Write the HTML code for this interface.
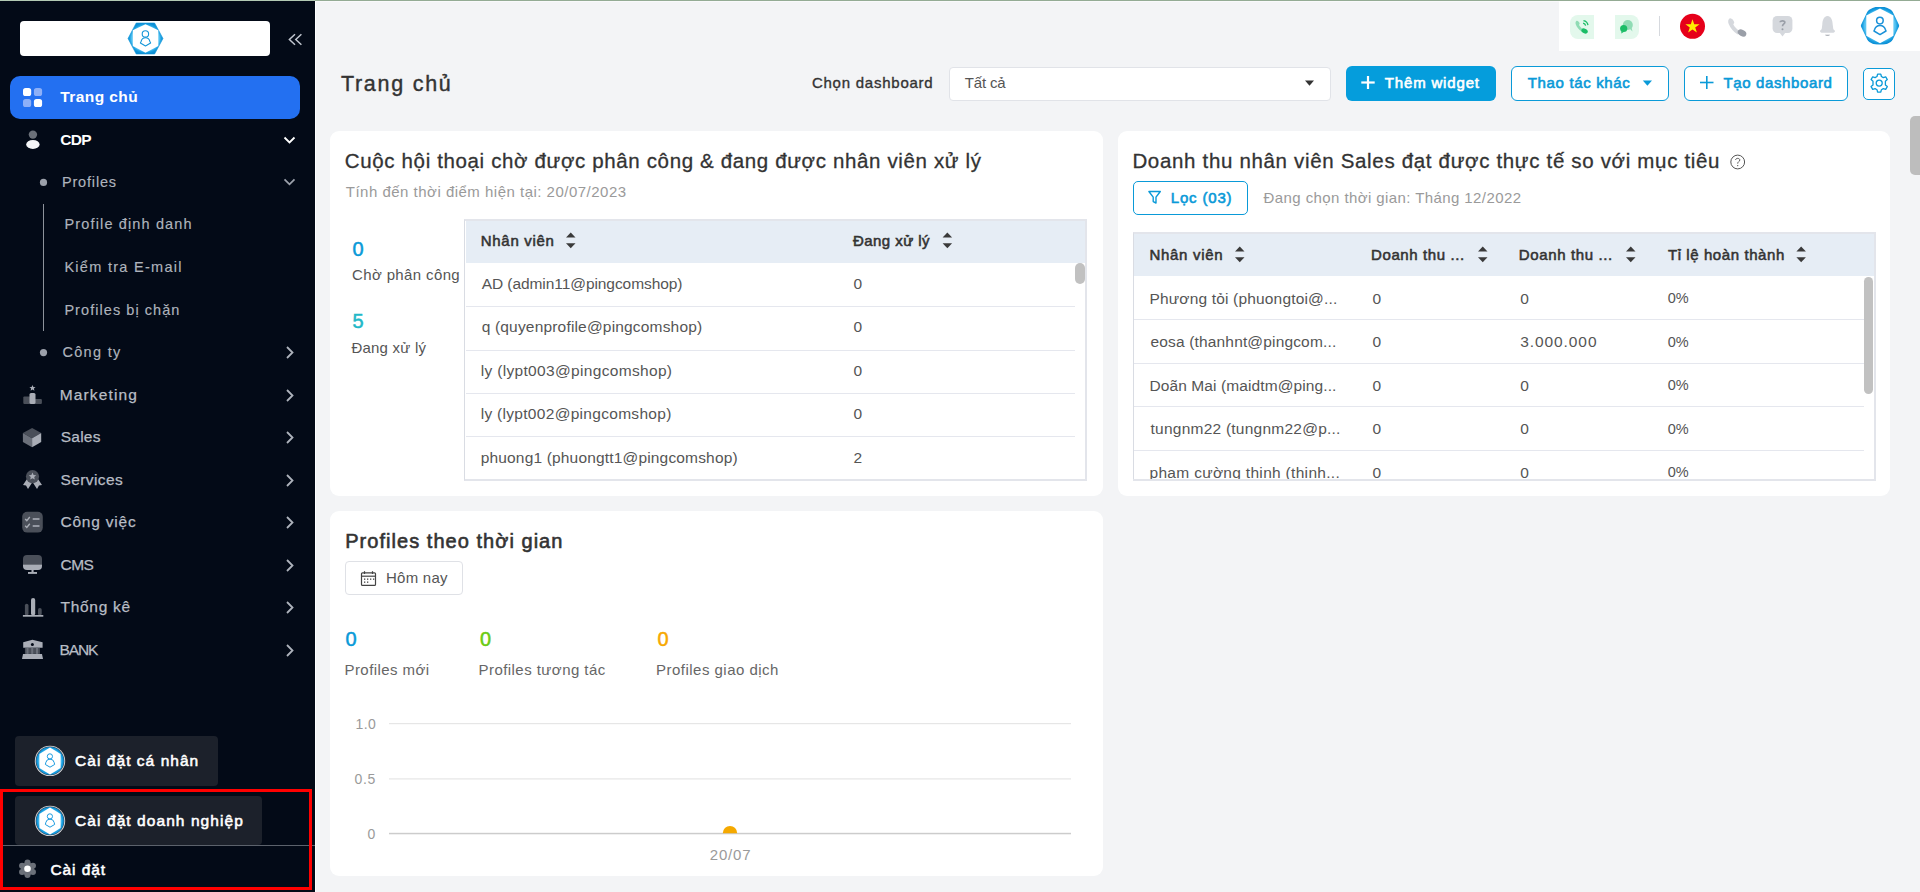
<!DOCTYPE html>
<html><head><meta charset="utf-8">
<style>
*{box-sizing:border-box;margin:0;padding:0}
html,body{width:1920px;height:892px;overflow:hidden;background:#f3f4f6;font-family:"Liberation Sans",sans-serif;color:#333}
.tx{position:absolute;white-space:nowrap;z-index:5}
.a{position:absolute}
svg{position:absolute;overflow:visible}
</style></head><body>
<!-- top line -->
<div class="a" style="left:0;top:0;width:1920px;height:1px;background:#94ab94;z-index:20"></div>
<div class="a" style="left:0;top:0;width:315px;height:1px;background:#b3c9b3;z-index:21"></div>
<div class="a" style="left:316px;top:1px;width:1604px;height:1px;background:#f9f9fb"></div>

<!-- SIDEBAR -->
<div class="a" style="left:0;top:0;width:315px;height:892px;background:#030a17"></div>
<div class="a" style="left:315px;top:0;width:1px;height:892px;background:#fff"></div>
<div class="a" style="left:20px;top:21px;width:250px;height:35px;background:#fff;border-radius:4px"></div>
<!-- logo hex -->
<svg style="left:0;top:0" width="315" height="70">
  <defs><radialGradient id="hexg" cx="0.5" cy="0.5" r="0.5"><stop offset="0.78" stop-color="#5cc6f3"/><stop offset="0.9" stop-color="#1a9fe0"/><stop offset="1" stop-color="#0b8ed5"/></radialGradient></defs>
  <polygon points="128,38.5 136.2,23 154.6,23 163,38.5 154.6,54 136.2,54" fill="url(#hexg)" stroke="#1496d8" stroke-width="0.6" stroke-linejoin="round"/>
  <polygon points="145.5,24.2 158.3,30.3 158.3,45.9 145.5,52.8 132.8,45.9 132.8,30.3" fill="#fff"/>
  <circle cx="145.4" cy="33.9" r="3.2" fill="none" stroke="#1496d8" stroke-width="1.1"/>
  <path d="M141.2,41.2 A4.4,4.4 0 0 1 149.8,41.2 L150.6,43 L145.5,46 L140.4,43 Z" fill="none" stroke="#1496d8" stroke-width="1.1" stroke-linejoin="round"/>
</svg>
<!-- collapse -->
<svg style="left:0;top:0" width="315" height="70">
  <polyline points="295,34.3 289.4,39.5 295,44.7" fill="none" stroke="#c0c5ce" stroke-width="1.5"/>
  <polyline points="301.4,34.3 295.8,39.5 301.4,44.7" fill="none" stroke="#c0c5ce" stroke-width="1.5"/>
</svg>
<!-- active item -->
<div class="a" style="left:10px;top:76px;width:290px;height:43px;background:#2370f1;border-radius:10px"></div>
<svg style="left:0;top:0" width="315" height="700">
  <!-- grid icon -->
  <rect x="23" y="88" width="8.2" height="8" rx="2.6" fill="#fff"/>
  <rect x="33.9" y="88" width="8.2" height="8" rx="2.6" fill="#8db0f8"/>
  <rect x="23" y="99" width="8.2" height="8" rx="2.6" fill="#8db0f8"/>
  <rect x="33.9" y="99" width="8.2" height="8" rx="2.6" fill="#fff"/>
  <!-- CDP person -->
  <circle cx="32.9" cy="134.6" r="4.2" fill="#6b7079"/>
  <ellipse cx="32.9" cy="144.4" rx="6.7" ry="4.5" fill="#f4f5f7"/>
  <polyline points="284.5,137.5 289.5,142.5 294.5,137.5" fill="none" stroke="#fff" stroke-width="1.8"/>
  <!-- Profiles -->
  <circle cx="43.5" cy="182.4" r="3.6" fill="#9ca1ab"/>
  <polyline points="284.5,179.3 289.5,184.3 294.5,179.3" fill="none" stroke="#9ca1ab" stroke-width="1.8"/>
  <rect x="43" y="204" width="1" height="127" fill="#8d929b"/>
  <!-- Cong ty -->
  <circle cx="43.5" cy="352.6" r="3.6" fill="#9ca1ab"/>
  <g fill="none" stroke="#aeb3bc" stroke-width="1.8">
    <polyline points="287,347 292.5,352.5 287,358"/>
    <polyline points="287,390 292.5,395.5 287,401"/>
    <polyline points="287,432 292.5,437.5 287,443"/>
    <polyline points="287,475 292.5,480.5 287,486"/>
    <polyline points="287,517 292.5,522.5 287,528"/>
    <polyline points="287,560 292.5,565.5 287,571"/>
    <polyline points="287,602 292.5,607.5 287,613"/>
    <polyline points="287,645 292.5,650.5 287,656"/>
  </g>
  <!-- Marketing podium -->
  <path d="M32.5,384.9 L33.4,387 L35.6,387.2 L33.9,388.6 L34.4,390.8 L32.5,389.6 L30.6,390.8 L31.1,388.6 L29.4,387.2 L31.6,387 Z" fill="#a9adb6"/>
  <rect x="23.3" y="396.5" width="7" height="7.4" rx="1" fill="#4a4f59"/>
  <rect x="34.5" y="399" width="7.4" height="4.9" rx="1" fill="#4a4f59"/>
  <rect x="29.5" y="393" width="6" height="10.9" rx="1.5" fill="#a9adb6"/>
  <!-- Sales cube -->
  <polygon points="32.1,427.9 41.2,433 32.1,438.2 22.9,433" fill="#4a4f59"/>
  <polygon points="22.9,433 32.1,438.2 32.1,447.2 22.9,442" fill="#6b707a"/>
  <polygon points="41.2,433 32.1,438.2 32.1,447.2 41.2,442" fill="#a9adb6"/>
  <!-- Services award -->
  <polygon points="27,479 23,485 26,485.5 28,489 32.5,482" fill="#a9adb6"/>
  <polygon points="38,479 42,485 39,485.5 37,489 32.5,482" fill="#a9adb6"/>
  <circle cx="32.5" cy="476.6" r="6.6" fill="#4a4f59"/>
  <path d="M32.5,472.6 L33.6,475.1 L36.2,475.3 L34.2,477 L34.8,479.6 L32.5,478.2 L30.2,479.6 L30.8,477 L28.8,475.3 L31.4,475.1 Z" fill="#a9adb6"/>
  <!-- Cong viec -->
  <rect x="22.2" y="511.8" width="20.6" height="20.8" rx="5" fill="#4a4f59"/>
  <g fill="none" stroke="#a9adb6" stroke-width="1.4">
    <polyline points="25.2,519 26.8,520.6 29.8,517"/>
    <polyline points="25.2,525.8 26.8,527.4 29.8,523.8"/>
    <line x1="32.7" y1="519" x2="39.5" y2="519" stroke-width="1.6"/>
    <line x1="32.7" y1="526" x2="39.5" y2="526" stroke-width="1.6"/>
  </g>
  <!-- CMS monitor -->
  <path d="M27,554.9 H38 A4,4 0 0 1 42,558.9 V564.6 H23 V558.9 A4,4 0 0 1 27,554.9 Z" fill="#4a4f59"/>
  <path d="M23,564.6 H42 V566.1 A4,4 0 0 1 38,570.1 H27 A4,4 0 0 1 23,566.1 Z" fill="#a9adb6"/>
  <rect x="31.5" y="570" width="2.1" height="2.5" fill="#a9adb6"/>
  <rect x="28" y="572" width="9" height="1.9" fill="#a9adb6"/>
  <!-- Thong ke -->
  <rect x="24.9" y="603.7" width="3.6" height="12" rx="1.8" fill="#4a4f59"/>
  <rect x="31" y="598" width="4.2" height="17.5" rx="2.1" fill="#a9adb6"/>
  <rect x="38" y="608" width="3.7" height="7.5" rx="1.8" fill="#4a4f59"/>
  <rect x="22.9" y="615" width="20.4" height="1.7" fill="#a9adb6"/>
  <!-- BANK -->
  <polygon points="23.2,642.2 32.4,639.8 42.6,642.2 42.6,647.7 23.2,647.7" fill="#a9adb6"/>
  <circle cx="32.4" cy="644.4" r="1.5" fill="#030a17"/>
  <rect x="24.9" y="647.9" width="15" height="6" fill="#4a4f59"/>
  <rect x="26.5" y="647.9" width="2" height="6" fill="#6b707a"/>
  <rect x="31.2" y="647.9" width="2" height="6" fill="#6b707a"/>
  <rect x="36" y="647.9" width="2" height="6" fill="#6b707a"/>
  <polygon points="23,654 42,654 43,658.9 22,658.9" fill="#a9adb6"/>
</svg>

<!-- bottom settings -->
<div class="a" style="left:15px;top:736px;width:203px;height:50px;background:#1c212b;border-radius:4px"></div>
<div class="a" style="left:15px;top:796px;width:247px;height:49px;background:#1c212b;border-radius:4px"></div>
<div class="a" style="left:0;top:845px;width:315px;height:1px;background:#5c626c"></div>
<svg style="left:0;top:700px" width="315" height="192">
  <g id="av1" transform="translate(50,60.9)">
    <circle r="15.2" fill="#d9dbde"/>
    <circle r="14.3" fill="#3a3f48"/>
    <circle r="13.8" fill="url(#hexg)"/>
    <polygon points="0,-13.5 10.6,-7 10.6,7 0,13.6 -10.6,7 -10.6,-7" fill="#fff"/>
    <circle cx="-0.1" cy="-4.5" r="2.6" fill="none" stroke="#1a9be0" stroke-width="1"/>
    <path d="M-4.2,1.6 A4.3,4.3 0 0 1 4.2,1.6 L4.6,3.6 L0,6.3 L-4.6,3.6 Z" fill="none" stroke="#1a9be0" stroke-width="1" stroke-linejoin="round"/>
  </g>
  <use href="#av1" transform="translate(0,60)"/>
  <!-- gear -->
  <g transform="translate(27.5,168.8)" fill="#6b7079">
    <circle r="6.6"/>
    <circle cx="0" cy="-6.3" r="3"/><circle cx="5.46" cy="-3.15" r="3"/><circle cx="5.46" cy="3.15" r="3"/>
    <circle cx="0" cy="6.3" r="3"/><circle cx="-5.46" cy="3.15" r="3"/><circle cx="-5.46" cy="-3.15" r="3"/>
    <circle r="3.3" fill="#fff"/>
  </g>
</svg>
<div class="a" style="left:0;top:789px;width:312px;height:101px;border:3px solid #ff0000;z-index:10"></div>

<!-- HEADER -->
<div class="a" style="left:1559px;top:1px;width:361px;height:50px;background:#fff"></div>
<div class="a" style="left:1570px;top:15px;width:24px;height:24px;background:#e3f8ec;border-radius:8px 0 0 8px"></div>
<div class="a" style="left:1615px;top:15px;width:24px;height:24px;background:#e3f8ec;border-radius:0 8px 8px 0"></div>
<div class="a" style="left:1659px;top:16px;width:1px;height:20px;background:#d6d9de"></div>
<svg style="left:0;top:0" width="1920" height="60">
  <!-- phone green -->
  <path d="M1576.6,20.8 C1575.5,21.5 1575.2,23 1575.9,24.7 C1577,27.5 1579,29.9 1581.9,31.6 L1583.6,29.7 C1581.6,28.5 1580,26.8 1579,25 L1579.7,23.6 C1579.2,22.1 1578,20.5 1576.6,20.8 Z" fill="#8fdcb4"/>
  <ellipse cx="1584.6" cy="31" rx="3.4" ry="2.3" fill="#1bbd67" transform="rotate(28 1584.6 31)"/>
  <path d="M1583.06,23.05 A3.2,3.2 0 0 1 1585.65,25.64" fill="none" stroke="#1bbd67" stroke-width="1.3"/>
  <path d="M1583.47,20.69 A5.6,5.6 0 0 1 1588.0,25.23" fill="none" stroke="#1bbd67" stroke-width="1.3"/>
  <!-- chat green -->
  <circle cx="1627.8" cy="25" r="5" fill="#8fdcb4"/>
  <polygon points="1630,29 1632.5,31.6 1631.5,27.5" fill="#8fdcb4"/>
  <circle cx="1623.7" cy="28.5" r="3.6" fill="#1bbd67"/>
  <polygon points="1621.5,31 1621.3,33.5 1624,31.8" fill="#1bbd67"/>
  <!-- flag -->
  <circle cx="1692.5" cy="26.3" r="12.5" fill="#e6001a"/>
  <path d="M1692.5,19.2 L1694.2,24.3 L1699.6,24.3 L1695.2,27.5 L1696.9,32.6 L1692.5,29.5 L1688.1,32.6 L1689.8,27.5 L1685.4,24.3 L1690.8,24.3 Z" fill="#ffee00"/>
  <!-- phone gray -->
  <path d="M1729.8,18.3 C1728.2,19.3 1727.7,21.6 1728.7,24.1 C1730.4,28.3 1733.4,31.9 1737.7,34.4 L1740.2,31.6 C1737.2,29.8 1734.8,27.3 1733.3,24.6 L1734.3,22.6 C1733.6,20.3 1731.9,17.9 1729.8,18.3 Z" fill="#d5d8dd"/>
  <ellipse cx="1742" cy="33" rx="4.6" ry="3.1" fill="#9a9fa8" transform="rotate(28 1742 33)"/>
  <!-- question -->
  <rect x="1772.6" y="16" width="19.8" height="17" rx="4.5" fill="#d5d8dd"/>
  <polygon points="1779.5,32.5 1782.5,36.5 1785.5,32.5" fill="#d5d8dd"/>
  <path d="M1780.2,22.2 C1780.2,20.4 1784.8,20.4 1784.8,22.4 C1784.8,24 1782.5,24 1782.5,26.3" fill="none" stroke="#9a9fa8" stroke-width="1.7"/>
  <circle cx="1782.5" cy="29.2" r="1" fill="#9a9fa8"/>
  <!-- bell -->
  <path d="M1827.5,16 C1823.5,16.5 1822.5,20.5 1822.3,24.5 L1821.8,28.5 C1821.6,30 1820,30.2 1820,31.3 C1820,32.2 1821,32.8 1822.5,32.8 L1832.5,32.8 C1834,32.8 1835,32.2 1835,31.3 C1835,30.2 1833.4,30 1833.2,28.5 L1832.7,24.5 C1832.5,20.5 1831.5,16.5 1827.5,16 Z" fill="#d5d8dd"/>
  <path d="M1825,34.8 L1830,34.8 C1829.5,36.2 1825.5,36.2 1825,34.8 Z" fill="#9a9fa8"/>
  <!-- avatar hex -->
  <g>
    <clipPath id="avc"><circle cx="1880" cy="25.8" r="19.3"/></clipPath>
    <polygon clip-path="url(#avc)" points="1860.6,25.8 1869.6,7.1 1890.4,7.1 1899.4,25.8 1890.4,44.5 1869.6,44.5" fill="url(#hexg)"/>
    <polygon points="1880,8.5 1893.4,15.6 1893.4,35.8 1880,43.3 1866.3,35.8 1866.3,15.6" fill="#fff"/>
    <circle cx="1879.9" cy="20.6" r="3.3" fill="none" stroke="#1a91d8" stroke-width="1.5"/>
    <path d="M1874.6,29.5 A5.6,5.6 0 0 1 1885.4,29.5 L1886,31 L1880,34.6 L1874,31 Z" fill="none" stroke="#1a91d8" stroke-width="1.5" stroke-linejoin="round"/>
  </g>
</svg>

<!-- toolbar -->
<div class="a" style="left:948.5px;top:66.5px;width:382px;height:34px;background:#fff;border:1px solid #e1e3e8;border-radius:4px"></div>
<svg style="left:0;top:0" width="1920" height="110">
  <polygon points="1305,80.6 1314,80.6 1309.5,85.8" fill="#333"/>
</svg>
<div class="a" style="left:1346px;top:66px;width:150px;height:35px;background:#059ddc;border-radius:6px"></div>
<div class="a" style="left:1511px;top:66px;width:158px;height:35px;background:#fff;border:1.5px solid #0a9ad8;border-radius:6px"></div>
<div class="a" style="left:1684px;top:66px;width:164px;height:35px;background:#fff;border:1.5px solid #0a9ad8;border-radius:6px"></div>
<div class="a" style="left:1863px;top:68px;width:32px;height:32px;background:#fff;border:1.5px solid #0a9ad8;border-radius:5px"></div>
<svg style="left:0;top:0" width="1920" height="110">
  <g stroke="#fff" stroke-width="2.2"><line x1="1361.3" y1="82.5" x2="1374.7" y2="82.5"/><line x1="1368" y1="76" x2="1368" y2="89"/></g>
  <polygon points="1642.8,80.6 1652,80.6 1647.4,85.8" fill="#0a9ad8"/>
  <g stroke="#0a9ad8" stroke-width="1.6"><line x1="1700" y1="82.5" x2="1713.5" y2="82.5"/><line x1="1706.8" y1="76" x2="1706.8" y2="89"/></g>
  <g transform="translate(1879.2,83.1)" fill="none" stroke="#0a9ad8" stroke-width="1.3" stroke-linejoin="round">
    <path d="M-1.6,-9 L1.6,-9 L2.2,-6.6 L4.1,-5.5 L6.5,-6.3 L8.1,-3.5 L6.2,-1.9 L6.2,1.9 L8.1,3.5 L6.5,6.3 L4.1,5.5 L2.2,6.6 L1.6,9 L-1.6,9 L-2.2,6.6 L-4.1,5.5 L-6.5,6.3 L-8.1,3.5 L-6.2,1.9 L-6.2,-1.9 L-8.1,-3.5 L-6.5,-6.3 L-4.1,-5.5 L-2.2,-6.6 Z"/>
    <circle r="3"/>
  </g>
</svg>

<!-- page scrollbar -->
<div class="a" style="left:1910px;top:116px;width:10px;height:59px;background:#bdbdbd;border-radius:5px 0 0 5px"></div>

<!-- CARDS -->
<div class="a" style="left:330px;top:131px;width:773px;height:365px;background:#fff;border-radius:9px"></div>
<div class="a" style="left:1118px;top:131px;width:772px;height:365px;background:#fff;border-radius:9px"></div>
<div class="a" style="left:330px;top:511px;width:773px;height:365px;background:#fff;border-radius:9px"></div>

<!-- table 1 -->
<div class="a" style="left:464px;top:219px;width:623px;height:262px;border:2px solid #e3e5eb;border-left:1.7px solid #d9dce3;background:#fff"></div>
<div class="a" style="left:465.6px;top:221px;width:619.4px;height:41.7px;background:#e6edf5"></div>
<div class="a" style="left:466px;top:306px;width:609px;height:1px;background:#e5e7ee"></div>
<div class="a" style="left:466px;top:349.5px;width:609px;height:1px;background:#e5e7ee"></div>
<div class="a" style="left:466px;top:393px;width:609px;height:1px;background:#e5e7ee"></div>
<div class="a" style="left:466px;top:436px;width:609px;height:1px;background:#e5e7ee"></div>
<div class="a" style="left:1075px;top:263px;width:9.7px;height:21px;background:#c1c1c1;border-radius:5px"></div>

<!-- table 2 -->
<div class="a" style="left:1132.5px;top:232px;width:743px;height:249px;border:2px solid #e3e5eb;border-left:1.7px solid #d9dce3;background:#fff"></div>
<div class="a" style="left:1134px;top:234px;width:739.8px;height:42.3px;background:#e6edf5"></div>
<div class="a" style="left:1134px;top:319.3px;width:730px;height:1px;background:#e5e7ee"></div>
<div class="a" style="left:1134px;top:362.8px;width:730px;height:1px;background:#e5e7ee"></div>
<div class="a" style="left:1134px;top:406.3px;width:730px;height:1px;background:#e5e7ee"></div>
<div class="a" style="left:1134px;top:449.8px;width:730px;height:1px;background:#e5e7ee"></div>
<div class="a" style="left:1864.3px;top:277px;width:9px;height:116.5px;background:#c1c1c1;border-radius:4.5px"></div>

<svg style="left:0;top:0" width="1920" height="892">
  <!-- sort icons -->
  <g fill="#3a3a3a" id="sort1">
    <polygon points="566,237.6 575.5,237.6 570.75,232.5"/>
    <polygon points="566,243.2 575.5,243.2 570.75,248.3"/>
  </g>
  <use href="#sort1" transform="translate(376.6,0)"/>
  <use href="#sort1" transform="translate(669,14)"/>
  <use href="#sort1" transform="translate(912,14)"/>
  <use href="#sort1" transform="translate(1060,14)"/>
  <use href="#sort1" transform="translate(1230.4,14)"/>
  <!-- ? icon -->
  <circle cx="1737.7" cy="162" r="6.9" fill="none" stroke="#555" stroke-width="1"/>
  <path d="M1735.6,160 C1735.6,157.8 1739.8,157.8 1739.8,160 C1739.8,161.6 1737.7,161.5 1737.7,163.6" fill="none" stroke="#555" stroke-width="1"/>
  <circle cx="1737.7" cy="165.6" r="0.7" fill="#555"/>
  <!-- filter icon -->
  <path d="M1148.9,191.5 L1160.3,191.5 L1156,197.2 L1156,203 L1153.2,201.6 L1153.2,197.2 Z" fill="none" stroke="#0a9ad8" stroke-width="1.4" stroke-linejoin="round"/>
  <!-- calendar -->
  <g fill="none" stroke="#444" stroke-width="1.2">
    <rect x="361.5" y="572.8" width="14" height="12.6" rx="1"/>
    <line x1="361.5" y1="576.2" x2="375.5" y2="576.2"/>
    <line x1="364.5" y1="571.2" x2="364.5" y2="574"/>
    <line x1="372.5" y1="571.2" x2="372.5" y2="574"/>
  </g>
  <g fill="#444">
    <rect x="364" y="578.5" width="1.3" height="1.3"/><rect x="367" y="578.5" width="1.3" height="1.3"/><rect x="370" y="578.5" width="1.3" height="1.3"/><rect x="373" y="578.5" width="1.3" height="1.3"/>
    <rect x="364" y="581.5" width="1.3" height="1.3"/><rect x="367" y="581.5" width="1.3" height="1.3"/>
  </g>
  <!-- chart -->
  <rect x="389" y="723" width="682" height="1.2" fill="#e6e6e6"/>
  <rect x="389" y="778.3" width="682" height="1.2" fill="#e6e6e6"/>
  <rect x="389" y="832.8" width="682" height="1.5" fill="#cccccc"/>
  <path d="M722.8,833.2 A7.2,7.2 0 0 1 737.2,833.2 Z" fill="#f5a900"/>
</svg>
<!-- Lọc btn & Hôm nay -->
<div class="a" style="left:1132.8px;top:181.3px;width:115.5px;height:34.2px;border:1.5px solid #0a9ad8;border-radius:5px"></div>
<div class="a" style="left:345.3px;top:561.3px;width:118.2px;height:34px;border:1px solid #dfe1e6;border-radius:4px"></div>

<div class="tx" style="left:60.2px;top:88.73px;font-size:15.5px;line-height:15.5px;color:#fff;font-weight:700;letter-spacing:0.43px">Trang chủ</div>
<div class="tx" style="left:60.2px;top:131.62px;font-size:15.5px;line-height:15.5px;color:#fff;font-weight:700;letter-spacing:-0.69px">CDP</div>
<div class="tx" style="left:61.9px;top:174.68px;font-size:14.5px;line-height:14.5px;color:#aeb3bc;letter-spacing:0.84px;-webkit-text-stroke:0.15px #aeb3bc">Profiles</div>
<div class="tx" style="left:64.5px;top:217.48px;font-size:14.5px;line-height:14.5px;color:#aeb3bc;letter-spacing:1.14px;-webkit-text-stroke:0.15px #aeb3bc">Profile định danh</div>
<div class="tx" style="left:64.4px;top:260.18px;font-size:14.5px;line-height:14.5px;color:#aeb3bc;letter-spacing:1.29px;-webkit-text-stroke:0.15px #aeb3bc">Kiểm tra E-mail</div>
<div class="tx" style="left:64.4px;top:302.98px;font-size:14.5px;line-height:14.5px;color:#aeb3bc;letter-spacing:1.06px;-webkit-text-stroke:0.15px #aeb3bc">Profiles bị chặn</div>
<div class="tx" style="left:62.4px;top:345.07px;font-size:14.5px;line-height:14.5px;color:#aeb3bc;letter-spacing:1.33px;-webkit-text-stroke:0.15px #aeb3bc">Công ty</div>
<div class="tx" style="left:59.7px;top:387.02px;font-size:15.5px;line-height:15.5px;color:#b8bdc5;letter-spacing:1.15px;-webkit-text-stroke:0.25px #b8bdc5">Marketing</div>
<div class="tx" style="left:60.7px;top:429.12px;font-size:15.5px;line-height:15.5px;color:#b8bdc5;letter-spacing:0.24px;-webkit-text-stroke:0.25px #b8bdc5">Sales</div>
<div class="tx" style="left:60.5px;top:472.32px;font-size:15.5px;line-height:15.5px;color:#b8bdc5;letter-spacing:0.4px;-webkit-text-stroke:0.25px #b8bdc5">Services</div>
<div class="tx" style="left:60.5px;top:514.43px;font-size:15.5px;line-height:15.5px;color:#b8bdc5;letter-spacing:0.78px;-webkit-text-stroke:0.25px #b8bdc5">Công việc</div>
<div class="tx" style="left:60.5px;top:557.33px;font-size:15.5px;line-height:15.5px;color:#b8bdc5;letter-spacing:-0.55px;-webkit-text-stroke:0.25px #b8bdc5">CMS</div>
<div class="tx" style="left:60.5px;top:599.43px;font-size:15.5px;line-height:15.5px;color:#b8bdc5;letter-spacing:0.71px;-webkit-text-stroke:0.25px #b8bdc5">Thống kê</div>
<div class="tx" style="left:59.5px;top:642.23px;font-size:15.5px;line-height:15.5px;color:#b8bdc5;letter-spacing:-1.12px;-webkit-text-stroke:0.25px #b8bdc5">BANK</div>
<div class="tx" style="left:75.1px;top:752.83px;font-size:15.5px;line-height:15.5px;color:#fff;letter-spacing:1.04px;-webkit-text-stroke:0.55px #fff">Cài đặt cá nhân</div>
<div class="tx" style="left:75.1px;top:812.83px;font-size:15.5px;line-height:15.5px;color:#fff;letter-spacing:1.07px;-webkit-text-stroke:0.55px #fff">Cài đặt doanh nghiệp</div>
<div class="tx" style="left:50.4px;top:861.83px;font-size:15.5px;line-height:15.5px;color:#fff;letter-spacing:0.93px;-webkit-text-stroke:0.55px #fff">Cài đặt</div>
<div class="tx" style="left:340.9px;top:74.12px;font-size:21.5px;line-height:21.5px;color:#333;letter-spacing:1.74px;-webkit-text-stroke:0.4px #333">Trang chủ</div>
<div class="tx" style="left:811.9px;top:75.35px;font-size:15px;line-height:15px;color:#333;letter-spacing:0.76px;-webkit-text-stroke:0.35px #333">Chọn dashboard</div>
<div class="tx" style="left:964.8px;top:75.35px;font-size:15px;line-height:15px;color:#555;letter-spacing:-0.17px">Tất cả</div>
<div class="tx" style="left:1384.8px;top:75.35px;font-size:15px;line-height:15px;color:#fff;letter-spacing:0.83px;-webkit-text-stroke:0.6px #fff">Thêm widget</div>
<div class="tx" style="left:1527.8px;top:75.35px;font-size:15px;line-height:15px;color:#0a9ad8;letter-spacing:0.65px;-webkit-text-stroke:0.6px #0a9ad8">Thao tác khác</div>
<div class="tx" style="left:1723.5px;top:75.35px;font-size:15px;line-height:15px;color:#0a9ad8;letter-spacing:0.62px;-webkit-text-stroke:0.6px #0a9ad8">Tạo dashboard</div>
<div class="tx" style="left:344.8px;top:151.47px;font-size:20.5px;line-height:20.5px;color:#333;letter-spacing:0.64px;-webkit-text-stroke:0.3px #333">Cuộc hội thoại chờ được phân công &amp; đang được nhân viên xử lý</div>
<div class="tx" style="left:345.8px;top:183.95px;font-size:15px;line-height:15px;color:#9a9a9a;letter-spacing:0.49px">Tính đến thời điểm hiện tại: 20/07/2023</div>
<div class="tx" style="left:352px;top:267.15px;font-size:15px;line-height:15px;color:#555;letter-spacing:0.37px">Chờ phân công</div>
<div class="tx" style="left:351.4px;top:340.25px;font-size:15px;line-height:15px;color:#555;letter-spacing:0.23px">Đang xử lý</div>
<div class="tx" style="left:480.8px;top:233.15px;font-size:15px;line-height:15px;color:#333;letter-spacing:0.7px;-webkit-text-stroke:0.55px #333">Nhân viên</div>
<div class="tx" style="left:853px;top:233.15px;font-size:15px;line-height:15px;color:#333;letter-spacing:0.44px;-webkit-text-stroke:0.55px #333">Đang xử lý</div>
<div class="tx" style="left:481.7px;top:275.82px;font-size:15.5px;line-height:15.5px;color:#555;letter-spacing:-0.07px">AD (admin11@pingcomshop)</div>
<div class="tx" style="left:853.6px;top:275.82px;font-size:15.5px;line-height:15.5px;color:#555;letter-spacing:0.1px">0</div>
<div class="tx" style="left:481.7px;top:319.32px;font-size:15.5px;line-height:15.5px;color:#555;letter-spacing:0.18px">q (quyenprofile@pingcomshop)</div>
<div class="tx" style="left:853.6px;top:319.32px;font-size:15.5px;line-height:15.5px;color:#555;letter-spacing:0.1px">0</div>
<div class="tx" style="left:480.7px;top:362.82px;font-size:15.5px;line-height:15.5px;color:#555;letter-spacing:0.33px">ly (lypt003@pingcomshop)</div>
<div class="tx" style="left:853.6px;top:362.82px;font-size:15.5px;line-height:15.5px;color:#555;letter-spacing:0.1px">0</div>
<div class="tx" style="left:480.7px;top:406.32px;font-size:15.5px;line-height:15.5px;color:#555;letter-spacing:0.3px">ly (lypt002@pingcomshop)</div>
<div class="tx" style="left:853.6px;top:406.32px;font-size:15.5px;line-height:15.5px;color:#555;letter-spacing:0.1px">0</div>
<div class="tx" style="left:480.7px;top:449.82px;font-size:15.5px;line-height:15.5px;color:#555;letter-spacing:0.17px">phuong1 (phuongtt1@pingcomshop)</div>
<div class="tx" style="left:853.6px;top:449.82px;font-size:15.5px;line-height:15.5px;color:#555;letter-spacing:0.1px">2</div>
<div class="tx" style="left:1132.4px;top:151.38px;font-size:20.5px;line-height:20.5px;color:#333;letter-spacing:0.67px;-webkit-text-stroke:0.3px #333">Doanh thu nhân viên Sales đạt được thực tế so với mục tiêu</div>
<div class="tx" style="left:1170.8px;top:189.95px;font-size:15px;line-height:15px;color:#0a9ad8;letter-spacing:0.82px;-webkit-text-stroke:0.6px #0a9ad8">Lọc (03)</div>
<div class="tx" style="left:1263.6px;top:189.95px;font-size:15px;line-height:15px;color:#9a9a9a;letter-spacing:0.41px">Đang chọn thời gian: Tháng 12/2022</div>
<div class="tx" style="left:1149.5px;top:247.25px;font-size:15px;line-height:15px;color:#333;letter-spacing:0.7px;-webkit-text-stroke:0.55px #333">Nhân viên</div>
<div class="tx" style="left:1371px;top:247.25px;font-size:15px;line-height:15px;color:#333;letter-spacing:0.61px;-webkit-text-stroke:0.55px #333">Doanh thu ...</div>
<div class="tx" style="left:1518.8px;top:247.25px;font-size:15px;line-height:15px;color:#333;letter-spacing:0.62px;-webkit-text-stroke:0.55px #333">Doanh thu ...</div>
<div class="tx" style="left:1667.9px;top:247.25px;font-size:15px;line-height:15px;color:#333;letter-spacing:0.59px;-webkit-text-stroke:0.55px #333">Tỉ lệ hoàn thành</div>
<div class="tx" style="left:1149.5px;top:290.57px;font-size:15.5px;line-height:15.5px;color:#555;letter-spacing:0.17px">Phương tỏi (phuongtoi@...</div>
<div class="tx" style="left:1372.5px;top:290.57px;font-size:15.5px;line-height:15.5px;color:#555;letter-spacing:0.1px">0</div>
<div class="tx" style="left:1520.2px;top:290.57px;font-size:15.5px;line-height:15.5px;color:#555;letter-spacing:0.1px">0</div>
<div class="tx" style="left:1667.8px;top:291.43px;font-size:14.5px;line-height:14.5px;color:#555">0%</div>
<div class="tx" style="left:1150.5px;top:334.07px;font-size:15.5px;line-height:15.5px;color:#555;letter-spacing:0.16px">eosa (thanhnt@pingcom...</div>
<div class="tx" style="left:1372.5px;top:334.07px;font-size:15.5px;line-height:15.5px;color:#555;letter-spacing:0.1px">0</div>
<div class="tx" style="left:1520.2px;top:334.07px;font-size:15.5px;line-height:15.5px;color:#555;letter-spacing:0.92px">3.000.000</div>
<div class="tx" style="left:1667.8px;top:334.93px;font-size:14.5px;line-height:14.5px;color:#555">0%</div>
<div class="tx" style="left:1149.5px;top:377.57px;font-size:15.5px;line-height:15.5px;color:#555;letter-spacing:0.1px">Doãn Mai (maidtm@ping...</div>
<div class="tx" style="left:1372.5px;top:377.57px;font-size:15.5px;line-height:15.5px;color:#555;letter-spacing:0.1px">0</div>
<div class="tx" style="left:1520.2px;top:377.57px;font-size:15.5px;line-height:15.5px;color:#555;letter-spacing:0.1px">0</div>
<div class="tx" style="left:1667.8px;top:378.43px;font-size:14.5px;line-height:14.5px;color:#555">0%</div>
<div class="tx" style="left:1150.5px;top:421.07px;font-size:15.5px;line-height:15.5px;color:#555;letter-spacing:0.24px">tungnm22 (tungnm22@p...</div>
<div class="tx" style="left:1372.5px;top:421.07px;font-size:15.5px;line-height:15.5px;color:#555;letter-spacing:0.1px">0</div>
<div class="tx" style="left:1520.2px;top:421.07px;font-size:15.5px;line-height:15.5px;color:#555;letter-spacing:0.1px">0</div>
<div class="tx" style="left:1667.8px;top:421.93px;font-size:14.5px;line-height:14.5px;color:#555">0%</div>
<div class="tx" style="left:1149.5px;top:464.57px;font-size:15.5px;line-height:15.5px;color:#555;letter-spacing:0.31px">pham cường thinh (thinh...</div>
<div class="tx" style="left:1372.5px;top:464.57px;font-size:15.5px;line-height:15.5px;color:#555;letter-spacing:0.1px">0</div>
<div class="tx" style="left:1520.2px;top:464.57px;font-size:15.5px;line-height:15.5px;color:#555;letter-spacing:0.1px">0</div>
<div class="tx" style="left:1667.8px;top:465.43px;font-size:14.5px;line-height:14.5px;color:#555">0%</div>
<div class="tx" style="left:345.2px;top:531.1px;font-size:20px;line-height:20px;color:#333;letter-spacing:1.04px;-webkit-text-stroke:0.6px #333">Profiles theo thời gian</div>
<div class="tx" style="left:385.9px;top:570.35px;font-size:15px;line-height:15px;color:#555;letter-spacing:0.28px">Hôm nay</div>
<div class="tx" style="left:344.5px;top:662.25px;font-size:15px;line-height:15px;color:#666;letter-spacing:0.43px">Profiles mới</div>
<div class="tx" style="left:478.5px;top:662.25px;font-size:15px;line-height:15px;color:#666;letter-spacing:0.45px">Profiles tương tác</div>
<div class="tx" style="left:656px;top:662.25px;font-size:15px;line-height:15px;color:#666;letter-spacing:0.48px">Profiles giao dịch</div>
<div class="tx" style="left:709.8px;top:846.55px;font-size:15px;line-height:15px;color:#9a9a9a;letter-spacing:0.8px">20/07</div>
<div class="tx" style="left:355.5px;top:717px;font-size:14px;line-height:14px;color:#9a9a9a;letter-spacing:0.41px">1.0</div>
<div class="tx" style="left:354.6px;top:772.1px;font-size:14px;line-height:14px;color:#9a9a9a;letter-spacing:0.61px">0.5</div>
<div class="tx" style="left:367.4px;top:826.9px;font-size:14px;line-height:14px;color:#9a9a9a">0</div>
<div class="tx" style="left:352.4px;top:238.8px;font-size:20px;line-height:20px;color:#0a9ad8;-webkit-text-stroke:0.5px #0a9ad8">0</div>
<div class="tx" style="left:352.5px;top:311px;font-size:20px;line-height:20px;color:#22b8c8;-webkit-text-stroke:0.5px #22b8c8">5</div>
<div class="tx" style="left:345.5px;top:628.8px;font-size:20px;line-height:20px;color:#0a9ad8;-webkit-text-stroke:0.5px #0a9ad8">0</div>
<div class="tx" style="left:480px;top:628.8px;font-size:20px;line-height:20px;color:#6bcb12;-webkit-text-stroke:0.5px #6bcb12">0</div>
<div class="tx" style="left:657.5px;top:628.8px;font-size:20px;line-height:20px;color:#f7a800;-webkit-text-stroke:0.5px #f7a800">0</div>
<div class="a" style="left:1132.5px;top:479px;width:743px;height:2px;background:#e3e5eb;z-index:6"></div>
<div class="a" style="left:1132.5px;top:481px;width:743px;height:6px;background:#fff;z-index:6"></div>
</body></html>
